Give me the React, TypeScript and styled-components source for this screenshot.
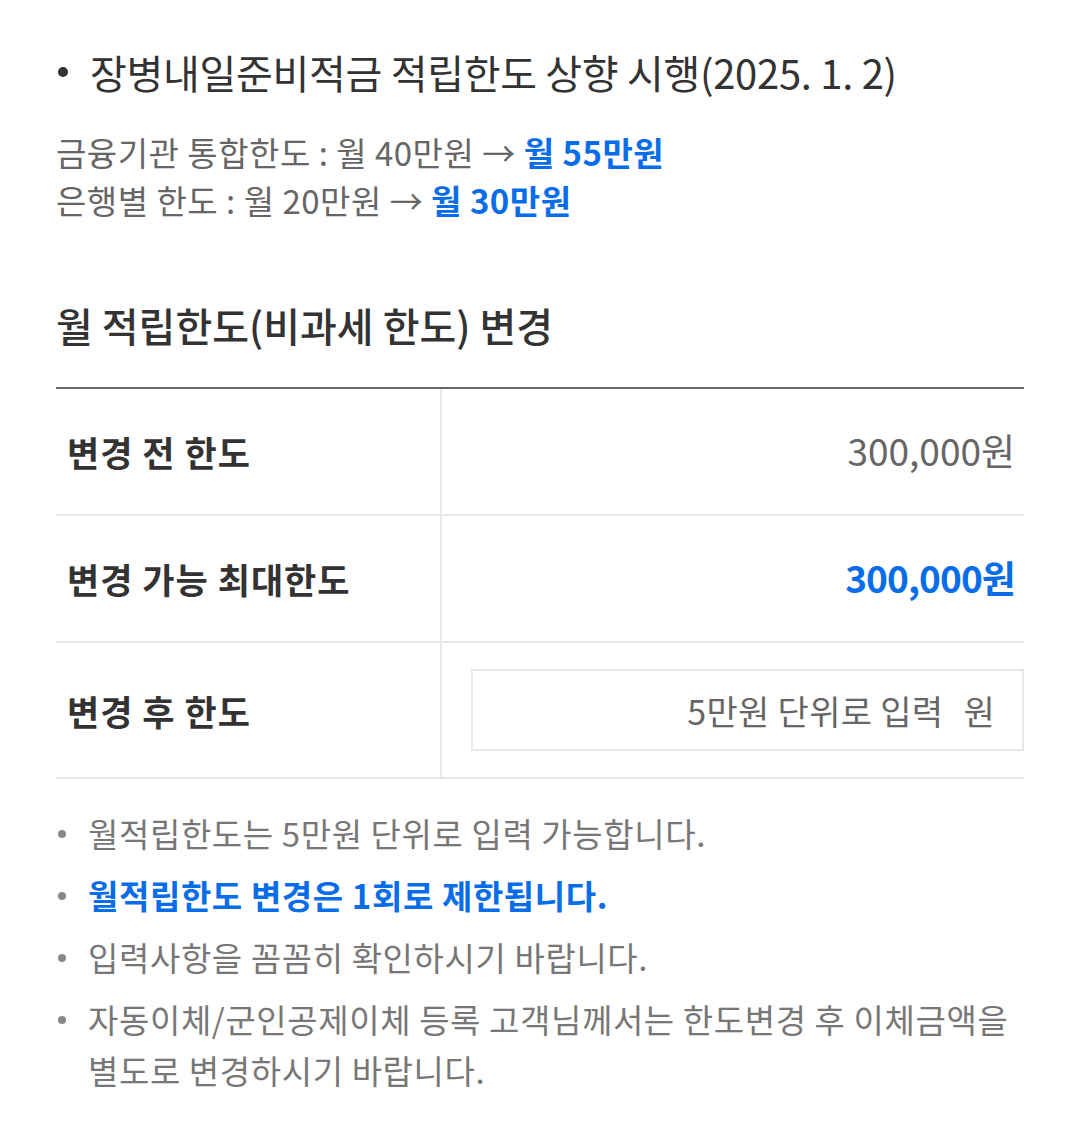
import React from "react";
import styled, { createGlobalStyle } from "styled-components";

const Global = createGlobalStyle`
  html, body { margin: 0; padding: 0; background: #fff; }
  body {
    font-family: "Noto Sans CJK KR", "Noto Sans", sans-serif;
    color: #333;
    -webkit-font-smoothing: antialiased;
  }
`;

const Page = styled.div`
  padding: 36px 56px 40px 56px;
  width: 968px;
`;

const Notice = styled.div`
  display: flex;
  align-items: center;
  gap: 22px;
  font-size: 40px;
  letter-spacing: -0.3px;
  color: #333;
  line-height: 72px;
`;

const Dot = styled.span<{ $size?: number; $color?: string }>`
  flex: none;
  width: ${(p) => p.$size ?? 10}px;
  height: ${(p) => p.$size ?? 10}px;
  border-radius: 50%;
  background: ${(p) => p.$color ?? "#333"};
  margin-left: 2px;
`;

const SubLines = styled.div`
  margin-top: 20px;
  font-size: 33px;
  letter-spacing: 0.5px;
  line-height: 48px;
  color: #666;
`;

const Strong = styled.strong`
  color: #0a6de8;
  font-weight: 700;
`;

const Heading = styled.h2`
  margin: 73px 0 0;
  font-size: 40px;
  font-weight: 500;
  letter-spacing: 0;
  color: #333;
  line-height: 56px;
`;

const Table = styled.div`
  margin-top: 34px;
  border-top: 2px solid #666;
  display: grid;
  grid-template-columns: 386px 1fr;
`;

const Cell = styled.div<{ $h: number }>`
  box-sizing: border-box;
  height: ${(p) => p.$h}px;
  display: flex;
  align-items: center;
  border-bottom: 2px solid #e8e8e8;
`;

const Label = styled(Cell)`
  padding-left: 11px;
  font-size: 35px;
  font-weight: 700;
  letter-spacing: 1px;
  color: #333;
  border-right: 2px solid #e8e8e8;
`;

const Value = styled(Cell)<{ $accent?: boolean }>`
  justify-content: flex-end;
  padding-right: 9px;
  padding-bottom: 4px;
  font-size: 37px;
  letter-spacing: ${(p) => (p.$accent ? "-0.9px" : "0")};
  font-weight: ${(p) => (p.$accent ? 700 : 400)};
  color: ${(p) => (p.$accent ? "#0a6de8" : "#666")};
`;

const InputCell = styled(Cell)`
  padding-left: 29px;
`;

const InputBox = styled.label`
  flex: 1;
  height: 82px;
  box-sizing: border-box;
  border: 2px solid #e8e8e8;
  display: flex;
  align-items: center;
  justify-content: flex-end;
  gap: 20px;
  padding-right: 27px;
  font-size: 34px;
  letter-spacing: 0.3px;
  color: #666;
`;

const Input = styled.input`
  flex: 1;
  min-width: 0;
  border: none;
  outline: none;
  background: transparent;
  text-align: right;
  font: inherit;
  letter-spacing: inherit;
  color: #333;
  padding: 0;
  &::placeholder { color: #666; }
`;

const Notes = styled.ul`
  list-style: none;
  margin: 29px 0 0;
  padding: 0;
  display: flex;
  flex-direction: column;
  gap: 11px;
`;

const Note = styled.li<{ $accent?: boolean }>`
  display: flex;
  align-items: flex-start;
  gap: 22px;
  font-size: 33px;
  line-height: 51px;
  letter-spacing: 0.6px;
  color: ${(p) => (p.$accent ? "#0a6de8" : "#777")};
  font-weight: ${(p) => (p.$accent ? 700 : 400)};
`;

const NoteDot = styled.span`
  flex: none;
  width: 8px;
  height: 8px;
  border-radius: 50%;
  background: #888;
  margin-top: 22px;
  margin-left: 2px;
`;

const rows = [
  { label: "변경 전 한도", value: "300,000원", h: 127 },
  { label: "변경 가능 최대한도", value: "300,000원", h: 127, accent: true },
];

const notes = [
  { text: "월적립한도는 5만원 단위로 입력 가능합니다." },
  { text: "월적립한도 변경은 1회로 제한됩니다.", accent: true },
  { text: "입력사항을 꼼꼼히 확인하시기 바랍니다." },
  { text: "자동이체/군인공제이체 등록 고객님께서는 한도변경 후 이체금액을 별도로 변경하시기 바랍니다." },
];

export default function App() {
  return (
    <>
      <Global />
      <Page>
        <Notice>
          <Dot $size={10} />
          <span>장병내일준비적금 적립한도 상향 시행(2025. 1. 2)</span>
        </Notice>
        <SubLines>
          <div>
            금융기관 통합한도 : 월 40만원 → <Strong>월 55만원</Strong>
          </div>
          <div>
            은행별 한도 : 월 20만원 → <Strong>월 30만원</Strong>
          </div>
        </SubLines>

        <Heading>월 적립한도(비과세 한도) 변경</Heading>

        <Table>
          {rows.map((r) => (
            <React.Fragment key={r.label}>
              <Label $h={r.h}>{r.label}</Label>
              <Value $h={r.h} $accent={r.accent}>
                {r.value}
              </Value>
            </React.Fragment>
          ))}
          <Label $h={136}>변경 후 한도</Label>
          <InputCell $h={136}>
            <InputBox>
              <Input type="text" inputMode="numeric" placeholder="5만원 단위로 입력" />
              <span>원</span>
            </InputBox>
          </InputCell>
        </Table>

        <Notes>
          {notes.map((n) => (
            <Note key={n.text} $accent={n.accent}>
              <NoteDot />
              <span>{n.text}</span>
            </Note>
          ))}
        </Notes>
      </Page>
    </>
  );
}
